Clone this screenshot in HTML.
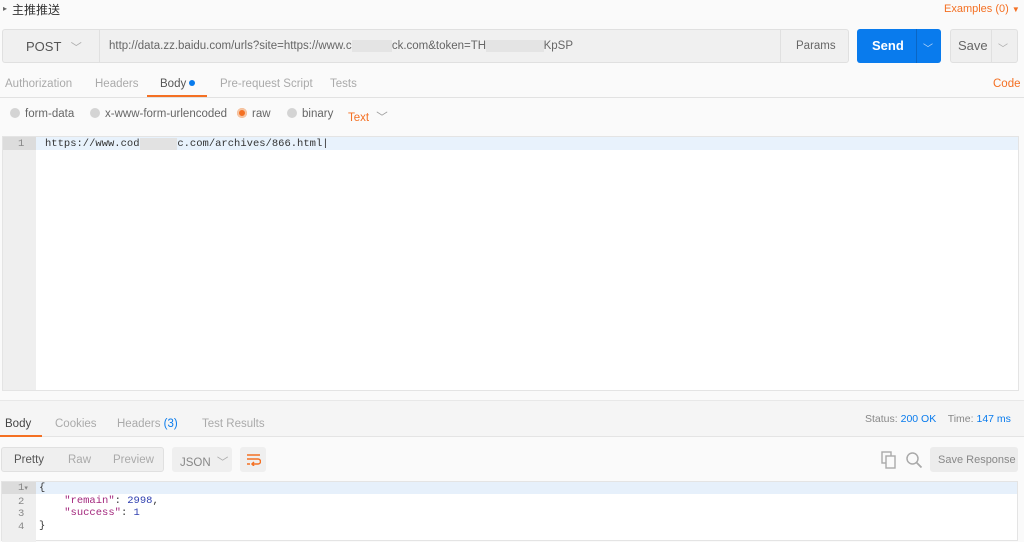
<!DOCTYPE html>
<html><head><meta charset="utf-8"><style>
*{margin:0;padding:0;box-sizing:border-box}
body{width:1024px;height:535px;overflow:hidden;background:#fafafa;font-family:"Liberation Sans","Noto Sans CJK SC",sans-serif;font-size:12px;color:#505050;position:relative}
.a{position:absolute}
.mono{font-family:"Liberation Mono",monospace;font-size:10.5px}
.rad{display:inline-block;width:10px;height:10px;border-radius:50%;background:#d4d4d4;vertical-align:-1px;margin-right:5px}
.t{font-size:11.5px}
</style></head><body>
<div class="a" style="left:3px;top:4px;font-size:8px;color:#666">▸</div>
<div class="a" style="left:12px;top:1px;font-size:12px;color:#333">主推推送</div>
<div class="a" style="left:944px;top:3px;color:#f47023;font-size:11px">Examples (0) <span style="font-size:8px">▼</span></div>

<div class="a" style="left:2px;top:29px;width:847px;height:34px;background:#f0f0f0;border:1px solid #e0e0e0;border-radius:3px"></div>
<div class="a" style="left:99px;top:30px;width:1px;height:32px;background:#e0e0e0"></div>
<div class="a" style="left:780px;top:30px;width:1px;height:32px;background:#e0e0e0"></div>
<div class="a" style="left:26px;top:39px;font-size:13px;color:#555">POST <span style="color:#aaa;font-size:11px;margin-left:6px">﹀</span></div>
<div class="a" style="left:109px;top:40px;font-size:11.5px;color:#666">http://data.zz.baidu.com/urls?site=https://www.c<span style="background:#e4e4e4;color:transparent">xxxxxxx</span>ck.com&amp;token=TH<span style="background:#e4e4e4;color:transparent">xxxxxxxxxx</span>KpSP</div>
<div class="a" style="left:796px;top:40px;font-size:11.5px;color:#666">Params</div>
<div class="a" style="left:857px;top:29px;width:84px;height:34px;background:#097bed;border-radius:3px"></div>
<div class="a" style="left:916px;top:29px;width:1px;height:34px;background:#0a66c4"></div>
<div class="a" style="left:872px;top:38px;color:#fff;font-weight:bold;font-size:13px">Send</div>
<div class="a" style="left:923px;top:40px;color:#bcd8f8;font-size:10px">﹀</div>
<div class="a" style="left:950px;top:29px;width:68px;height:34px;background:#efefef;border:1px solid #e0e0e0;border-radius:3px"></div>
<div class="a" style="left:991px;top:30px;width:1px;height:32px;background:#e0e0e0"></div>
<div class="a" style="left:958px;top:38px;font-size:13px;color:#666">Save</div>
<div class="a" style="left:998px;top:40px;color:#aaa;font-size:10px">﹀</div>

<div class="a" style="left:0;top:97px;width:1024px;height:1px;background:#e2e2e2"></div>
<div class="a t" style="left:5px;top:78px;color:#aaa">Authorization</div>
<div class="a t" style="left:95px;top:78px;color:#aaa">Headers</div>
<div class="a t" style="left:160px;top:78px;color:#555">Body <span style="display:inline-block;width:6px;height:6px;border-radius:50%;background:#097bed;vertical-align:1px"></span></div>
<div class="a" style="left:147px;top:95px;width:60px;height:2px;background:#f47023"></div>
<div class="a t" style="left:220px;top:78px;color:#aaa">Pre-request Script</div>
<div class="a t" style="left:330px;top:78px;color:#aaa">Tests</div>
<div class="a t" style="left:993px;top:78px;color:#f47023">Code</div>

<div class="a t" style="top:108px;left:10px;color:#666;white-space:nowrap"><span class="rad"></span>form-data</div>
<div class="a t" style="top:108px;left:90px;color:#666"><span class="rad"></span>x-www-form-urlencoded</div>
<div class="a t" style="top:108px;left:237px;color:#666"><span class="rad" style="background:#f47023;box-shadow:inset 0 0 0 2px #f5c6a5"></span>raw</div>
<div class="a t" style="top:108px;left:287px;color:#666"><span class="rad"></span>binary</div>
<div class="a t" style="top:109px;left:348px;color:#f47023">Text <span style="color:#999;margin-left:4px">﹀</span></div>

<div class="a" style="left:2px;top:136px;width:1017px;height:255px;background:#fff;border:1px solid #e4e4e4"></div>
<div class="a" style="left:3px;top:137px;width:33px;height:253px;background:#efefef"></div>
<div class="a" style="left:3px;top:137px;width:1015px;height:13px;background:#e8f2fc"></div>
<div class="a" style="left:3px;top:137px;width:33px;height:13px;background:#dcdcdc"></div>
<div class="a mono" style="left:18px;top:138px;color:#888">1</div>
<div class="a mono" style="left:45px;top:138px;color:#333">https://www.cod<span style="background:#e2e2e2;color:transparent">xxxxxx</span>c.com/archives/866.html|</div>

<div class="a" style="left:0;top:400px;width:1024px;height:37px;background:#f5f5f5;border-top:1px solid #e8e8e8;border-bottom:1px solid #e4e4e4"></div>
<div class="a t" style="left:5px;top:418px;color:#444">Body</div>
<div class="a" style="left:0;top:435px;width:42px;height:2px;background:#f47023"></div>
<div class="a t" style="left:55px;top:418px;color:#aaa">Cookies</div>
<div class="a t" style="left:117px;top:418px;color:#aaa">Headers <span style="color:#097bed">(3)</span></div>
<div class="a t" style="left:202px;top:418px;color:#aaa">Test Results</div>
<div class="a" style="left:865px;top:413px;color:#888;font-size:10.5px">Status: <span style="color:#097bed">200 OK</span> &nbsp;&nbsp; Time: <span style="color:#097bed">147 ms</span></div>

<div class="a" style="left:1px;top:447px;width:163px;height:25px;background:#efefef;border:1px solid #e0e0e0;border-radius:3px"></div>
<div class="a t" style="left:14px;top:454px;color:#555">Pretty</div>
<div class="a t" style="left:68px;top:454px;color:#aaa">Raw</div>
<div class="a t" style="left:113px;top:454px;color:#aaa">Preview</div>
<div class="a" style="left:172px;top:447px;width:60px;height:25px;background:#efefef;border-radius:3px"></div>
<div class="a t" style="left:180px;top:454px;color:#888">JSON <span style="color:#aaa;margin-left:3px">﹀</span></div>
<div class="a" style="left:240px;top:447px;width:26px;height:25px;background:#efefef;border-radius:3px"></div>
<svg class="a" style="left:246px;top:453px" width="15" height="13" viewBox="0 0 15 13"><path d="M1 2h13M1 6h11a2.5 2.5 0 0 1 0 5H6M8 9l-2 2 2 2M1 11h3" stroke="#f47023" stroke-width="1.5" fill="none"/></svg>
<svg class="a" style="left:881px;top:451px" width="16" height="18"><rect x="1" y="1" width="9" height="11" fill="none" stroke="#aaa" stroke-width="1.4"/><rect x="5" y="5" width="9" height="12" fill="#fafafa" stroke="#aaa" stroke-width="1.4"/></svg>
<svg class="a" style="left:905px;top:451px" width="18" height="18"><circle cx="7.5" cy="7.5" r="5.5" fill="none" stroke="#aaa" stroke-width="1.5"/><path d="M11.5 11.5l5 5" stroke="#aaa" stroke-width="1.8"/></svg>
<div class="a" style="left:930px;top:447px;width:88px;height:25px;background:#ececec;border-radius:3px"></div>
<div class="a" style="left:938px;top:454px;color:#888;font-size:11px">Save Response</div>

<div class="a" style="left:1px;top:481px;width:1017px;height:60px;background:#fff;border:1px solid #e4e4e4"></div>
<div class="a" style="left:2px;top:482px;width:34px;height:60px;background:#efefef"></div>
<div class="a" style="left:2px;top:482px;width:1015px;height:12px;background:#e6f0fb"></div>
<div class="a" style="left:2px;top:482px;width:34px;height:12px;background:#dcdcdc"></div>
<div class="a mono" style="left:18px;top:482px;color:#888;line-height:12.5px">1<span style="font-size:7px">▾</span><br>2<br>3<br>4</div>
<div class="a mono" style="left:39px;top:482px;color:#333;line-height:12.5px;white-space:pre">{
    <span style="color:#a3277d">"remain"</span>: <span style="color:#3040b0">2998</span>,
    <span style="color:#a3277d">"success"</span>: <span style="color:#3040b0">1</span>
}</div>
</body></html>
